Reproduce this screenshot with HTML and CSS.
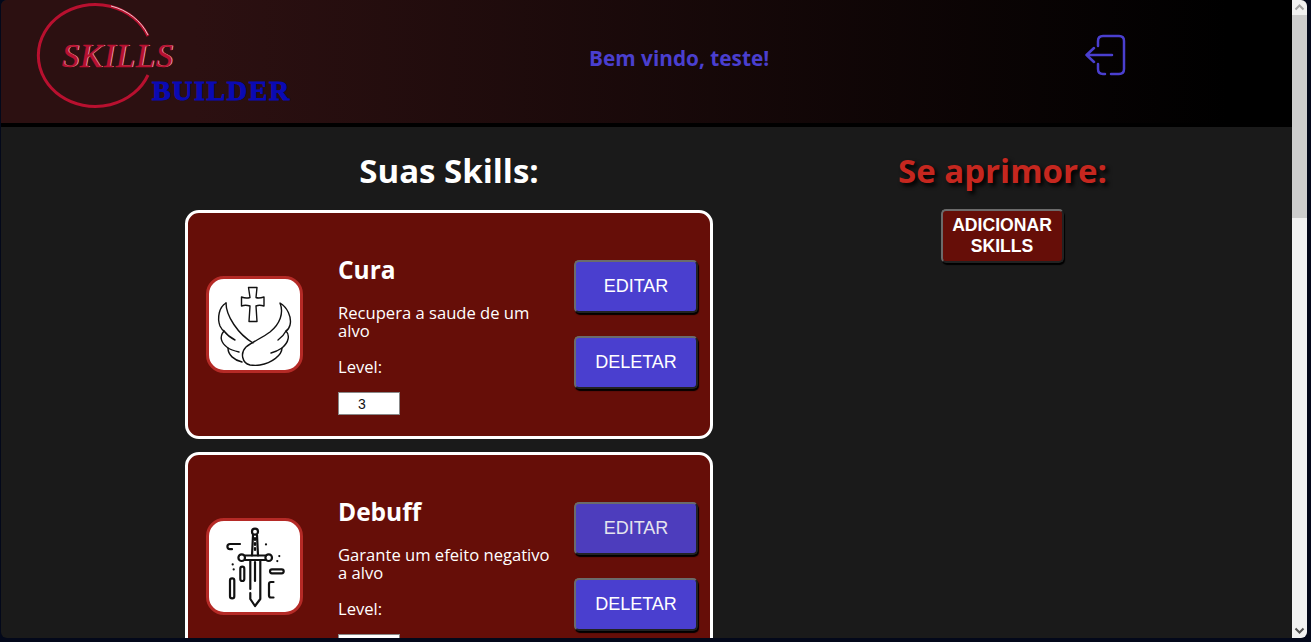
FILE: index.html
```html
<!DOCTYPE html>
<html lang="pt-BR">

<head>
    <meta charset="UTF-8">
    <meta name="viewport" content="width=device-width, initial-scale=1.0">
    <title>Skills Builder</title>
    <link rel="stylesheet" href="styles.css">
</head>

<body>
    <div class="janela">
        <div class="conteudo">
            <header class="topo">
                <div class="logo">
                    <svg class="logo-anel" viewBox="0 0 160 112" width="160" height="112" fill="none">
                        <path d="M147 36 A57 51 0 1 0 147 75" stroke="#b8102f" stroke-width="3" />
                        <path d="M147 35 A57 51 0 0 0 110 6" stroke="#e8c8cc" stroke-width="1" />
                    </svg>
                    <span class="logo-skills">SKILLS</span>
                    <span class="logo-builder">BUILDER</span>
                </div>
                <p class="boas-vindas">Bem vindo, teste!</p>
                <a class="sair" href="#" aria-label="Sair">
                    <svg viewBox="0 0 44 42" width="44" height="42" fill="none" stroke="#4a3fcf" stroke-width="2.5" stroke-linecap="round" stroke-linejoin="round">
                        <path d="M13 12 V7 Q13 2 18 2 H34 Q39 2 39 7 V35 Q39 40 34 40 H26" />
                        <path d="M20 40 H18 Q13 40 13 35 V30" />
                        <path d="M27 21 H1.5 M9 14 L1.5 21 L9 28" />
                    </svg>
                </a>
            </header>

            <main class="principal">
                <section class="coluna-skills">
                    <h2 class="titulo">Suas Skills:</h2>

                    <div class="card">
                        <div class="card-icone">
                            <svg viewBox="0 0 90 90" width="90" height="90" fill="none" stroke="#111" stroke-width="1.4" stroke-linecap="round" stroke-linejoin="round">
                                <path d="M38.5 7.5 H47 L46 17.5 C48 18.5 51 18 54 17 V26 C51 25 48 25 46 26 L47 41.5 H39 L40 26 C37 25 34 25 31.5 26 V17 C34 18 37 18.5 40 17.5 Z" />
                                <path d="M70 23 C74 33 70 44 60 52 C52 58 42 62 36 67 C30 73 32 83 40 85 C44 85.5 47 85.5 50 85 C62 83 72 75 72 68 C79 62 80 55 76 51 C78 50 79 49 80 45 C82 37 77 27 70 23 Z" />
                                <path d="M76 51 C74 55 72 57 68 60 M72 68 C69 70 65 72 61 73" />
                                <path d="M16 23 C16 36 28 54 43 63" />
                                <path d="M16 23 C9 27 7 38 10 46 C11 48 12 50 14 51 C9 57 11 63 18 68 C18 75 24 80 32 82" />
                                <path d="M14 51 C17 55 21 58 25 60 M18 68 C21 70 25 71 29 72" />
                            </svg>
                        </div>
                        <div class="card-info">
                            <h3>Cura</h3>
                            <p class="descricao">Recupera a saude de um alvo</p>
                            <label class="nivel" for="nivelCura">Level:</label>
                            <input class="nivel-valor" type="text" id="nivelCura" value="3">
                        </div>
                        <div class="card-botoes">
                            <button class="botao">EDITAR</button>
                            <button class="botao">DELETAR</button>
                        </div>
                    </div>

                    <div class="card">
                        <div class="card-icone">
                            <svg viewBox="0 0 90 90" width="90" height="90" fill="none" stroke="#111" stroke-width="2.2" stroke-linecap="round" stroke-linejoin="round">
                                <circle cx="45" cy="9.7" r="3" />
                                <path d="M43 13 L42 33.5 M47 13 L48 33.5 M45 16 V18 M45 21 V23 M45 26 V28" />
                                <circle cx="31.7" cy="35.7" r="3.3" />
                                <circle cx="58.7" cy="35.7" r="3.3" />
                                <path d="M35 33.5 H55.4 M35 38 H55.4" />
                                <path d="M40.3 38 V67 M40.3 71 V77 L45 84 L50.3 77 V38 M45 40 V59" />
                                <path d="M30 22 H20 A2.6 2.6 0 0 0 20 27.2 H22" />
                                <rect x="60" y="47.3" width="13.7" height="4" rx="2" />
                                <rect x="30.3" y="44.7" width="4" height="14.3" rx="2" />
                                <rect x="20" y="56.3" width="4.3" height="20" rx="2.1" />
                                <path d="M63.5 60 H61 A2 2 0 0 0 59 62 V73.5 A2 2 0 0 0 61 75.5 H63.5" />
                                <path d="M56 22.3 V22.4 M69.3 34 V34.1 M67.3 39 V39.1 M22.7 42.3 V42.4 M23.7 47.3 V47.4" />
                            </svg>
                        </div>
                        <div class="card-info">
                            <h3>Debuff</h3>
                            <p class="descricao">Garante um efeito negativo a alvo</p>
                            <label class="nivel" for="nivelDebuff">Level:</label>
                            <input class="nivel-valor" type="text" id="nivelDebuff" value="2">
                        </div>
                        <div class="card-botoes">
                            <button class="botao botao-hover">EDITAR</button>
                            <button class="botao">DELETAR</button>
                        </div>
                    </div>
                </section>

                <section class="coluna-aprimorar">
                    <h2 class="titulo titulo-vermelho">Se aprimore:</h2>
                    <button class="botao-adicionar">ADICIONAR SKILLS</button>
                </section>
            </main>
        </div>

        <div class="barra-rolagem">
            <svg class="seta" viewBox="0 0 15 15" width="15" height="15" fill="none" stroke="#a3a3a3" stroke-width="2">
                <path d="M3.5 9.5 L7.5 5.5 L11.5 9.5" />
            </svg>
            <div class="barra-polegar"></div>
            <svg class="seta seta-baixo" viewBox="0 0 15 15" width="15" height="15" fill="none" stroke="#505050" stroke-width="2">
                <path d="M3.5 5.5 L7.5 9.5 L11.5 5.5" />
            </svg>
        </div>
    </div>
</body>

</html>
```

FILE: styles.css
```css
* {
    margin: 0;
    padding: 0;
    box-sizing: border-box;
    font-family: "Open Sans", sans-serif;
}

body {
    height: 642px;
    overflow: hidden;
    background: #03081a;
}

.janela {
    display: flex;
    height: 638px;
    margin: 0 4px 0 1px;
    border-radius: 6px;
    overflow: hidden;
}

.conteudo {
    flex: 1;
    min-width: 0;
    overflow: hidden;
    background: #1a1a1a;
}

/* topo */
.topo {
    display: flex;
    align-items: center;
    height: 127px;
    border-bottom: 4px solid #000;
    background: linear-gradient(90deg, #2c1011 15%, #000 95%);
}

.logo {
    position: relative;
    flex: none;
    width: 290px;
    height: 123px;
}

.logo-anel {
    position: absolute;
    left: 0;
    top: 0;
}

.logo-skills {
    position: absolute;
    left: 61px;
    top: 37px;
    font-family: "Liberation Serif", serif;
    font-style: italic;
    font-size: 34px;
    letter-spacing: 1px;
    color: #b8102f;
    -webkit-text-stroke: 0.5px #b8102f;
    text-shadow: 1px 0 0 #e8b8c0;
}

.logo-builder {
    position: absolute;
    left: 151px;
    top: 75px;
    font-family: "Liberation Serif", serif;
    font-weight: bold;
    font-size: 28px;
    letter-spacing: 1.6px;
    color: #0a0ab4;
    -webkit-text-stroke: 1px #0a0ab4;
}

.boas-vindas {
    margin-left: 298px;
    margin-top: -8px;
    width: 180px;
    font-size: 20.8px;
    font-weight: bold;
    white-space: nowrap;
    color: #4a3fcf;
}

.sair {
    display: block;
    height: 42px;
    margin-left: 316px;
    margin-top: -13px;
}

/* colunas */
.principal {
    display: flex;
    padding-left: 184px;
}

.coluna-skills {
    flex: none;
    width: 528px;
}

.coluna-aprimorar {
    flex: 1;
    display: flex;
    flex-direction: column;
    align-items: center;
}

.titulo {
    height: 83px;
    padding-top: 21px;
    font-size: 33px;
    line-height: 46px;
    text-align: center;
    color: #fff;
}

.titulo-vermelho {
    color: #c5271f;
    text-shadow: 3px 3px 4px #000;
}

/* cards */
.card {
    display: flex;
    align-items: center;
    margin-bottom: 13px;
    padding: 0 12px 0 18px;
    border: 3px solid #fff;
    border-radius: 14px;
    background: #660e08;
}

.card-icone {
    flex: none;
    width: 97px;
    height: 97px;
    padding: 1px 0 0 1px;
    border: 3px solid #b52a26;
    border-radius: 18px;
    background: #fff;
}

.card-icone svg {
    display: block;
}

.card-info {
    flex: 1;
    min-width: 0;
    height: 223px;
    margin: 0 13px 0 35px;
    padding-top: 41px;
    color: #fff;
}

.card-info h3 {
    font-size: 24.5px;
    line-height: 32px;
    margin-bottom: 18px;
}

.descricao {
    font-size: 16.6px;
    line-height: 18px;
    margin-bottom: 16px;
}

.nivel {
    display: block;
    font-size: 16.6px;
    line-height: 22px;
    margin-bottom: 14px;
}

.nivel-valor {
    display: block;
    width: 62px;
    height: 23px;
    padding-right: 14px;
    border: 1px solid #888;
    background: #fff;
    text-align: center;
    font-family: "Liberation Sans", sans-serif;
    font-size: 14px;
    color: #111;
}

.card-botoes {
    flex: none;
    display: flex;
    flex-direction: column;
    gap: 23px;
}

.botao {
    width: 124px;
    height: 53px;
    border: 2px solid;
    border-color: #6b6b6b #222 #222 #6b6b6b;
    border-radius: 5px;
    background: #4a3fcf;
    box-shadow: 1px 2px 1px #000;
    font-family: "Liberation Sans", sans-serif;
    font-size: 18px;
    color: #fff;
    cursor: pointer;
}

.botao-hover {
    background: #4d3dbd;
    color: #e4e4ee;
}

.botao-adicionar {
    width: 123px;
    height: 54px;
    margin: -1px 1px 0 0;
    padding: 0 8px;
    border: 2px solid;
    border-color: #6b6b6b #222 #222 #6b6b6b;
    border-radius: 5px;
    background: #660e08;
    box-shadow: 1px 2px 1px #000;
    font-family: "Liberation Sans", sans-serif;
    font-size: 17.6px;
    font-weight: bold;
    line-height: 21px;
    color: #fff;
    cursor: pointer;
}

/* barra de rolagem */
.barra-rolagem {
    flex: none;
    display: flex;
    flex-direction: column;
    width: 15px;
    background: #f1f1f1;
}

.seta {
    display: block;
    flex: none;
}

.seta-baixo {
    margin-top: auto;
}

.barra-polegar {
    height: 203px;
    background: #cdcdcd;
}
```
